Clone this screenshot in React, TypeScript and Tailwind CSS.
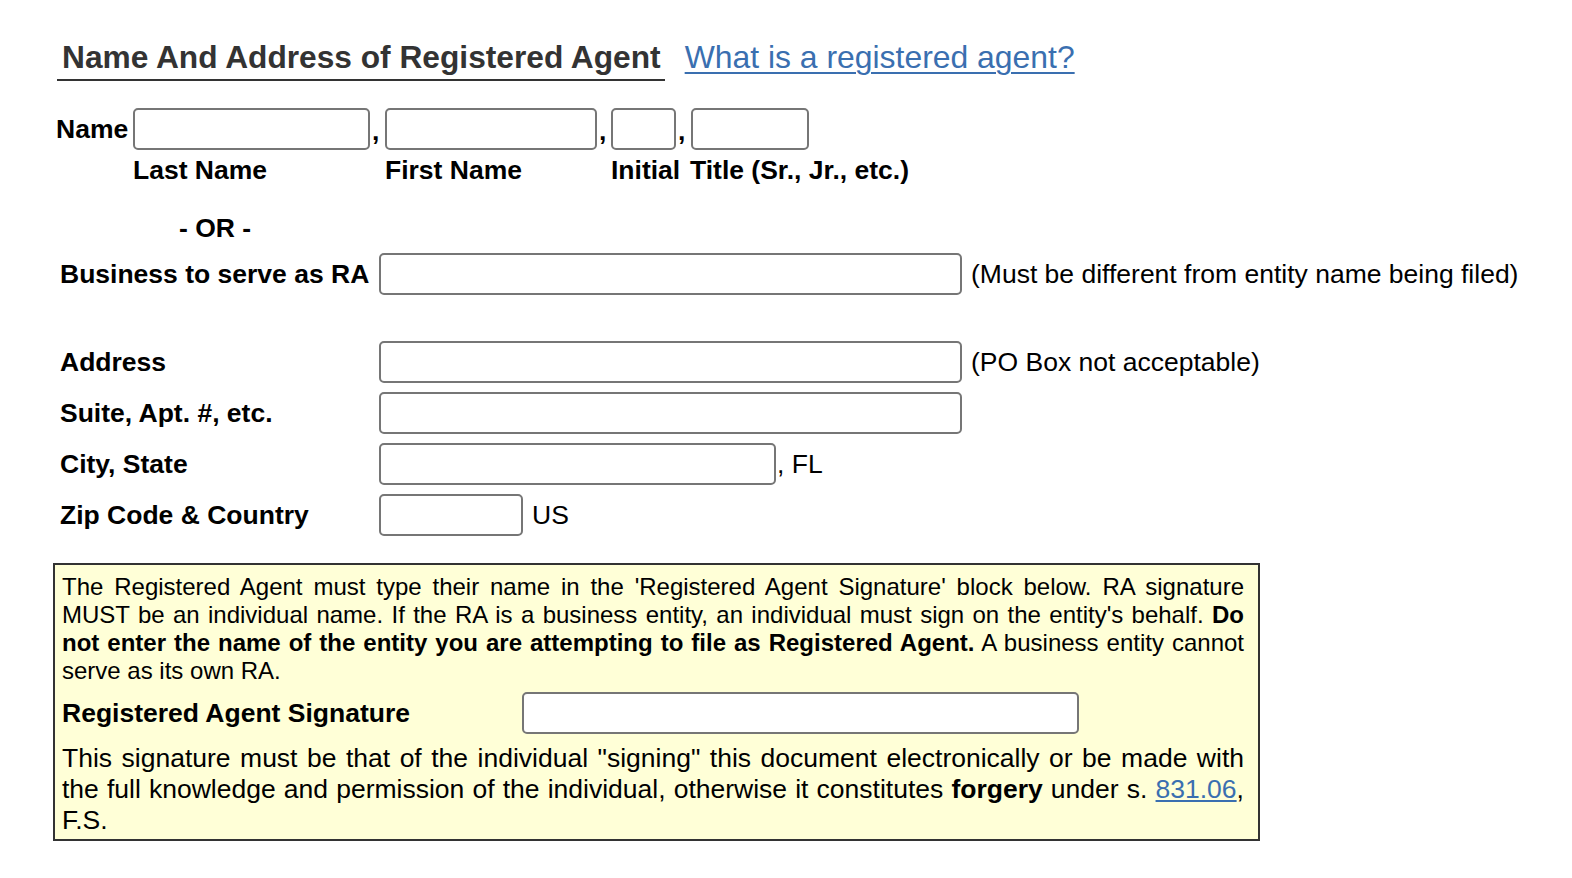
import React from "react";

const inputCls =
  "block h-[42px] shrink-0 rounded-[5px] border-2 border-[#767676] bg-white";

function Row({
  label,
  inputW,
  after,
  afterCls,
  className,
}: {
  label: string;
  inputW: string;
  after?: string;
  afterCls?: string;
  className?: string;
}) {
  return (
    <div className={`ml-[60px] flex items-center ${className ?? ""}`}>
      <span className="w-[319px] shrink-0 text-[26.5px] font-bold leading-[30px] text-black">
        {label}
      </span>
      <span className={`${inputCls} ${inputW}`} />
      {after ? (
        <span className={`text-[26.5px] leading-[30px] text-black ${afterCls ?? ""}`}>
          {after}
        </span>
      ) : null}
    </div>
  );
}

export default function App() {
  return (
    <div
      className="min-h-[878px] w-full bg-white pt-[39px] text-black"
      style={{ fontFamily: '"Liberation Sans", Arial, Helvetica, sans-serif' }}
    >
      {/* Heading */}
      <div className="ml-[57px] flex items-start">
        <h2 className="border-b-2 border-[#333333] pb-[4px] pl-[5px] pr-[4px] text-[31.7px] font-bold leading-[36px] text-[#333333]">
          Name And Address of Registered Agent
        </h2>
        <a
          href="#"
          className="ml-[20px] text-[31.9px] leading-[36px] text-[#3a6fb0] underline decoration-2 underline-offset-[4px]"
        >
          What is a registered agent?
        </a>
      </div>

      {/* Name row */}
      <div className="ml-[56px] mt-[27px] flex h-[42px] items-center">
        <span className="w-[77px] shrink-0 text-[26.5px] font-bold leading-[30px]">Name</span>
        <span className={`${inputCls} w-[237px]`} />
        <span className="w-[15px] shrink-0 self-end pb-[4px] pl-[2px] text-[26.5px] font-bold leading-[30px]">,</span>
        <span className={`${inputCls} w-[212px]`} />
        <span className="w-[14px] shrink-0 self-end pb-[4px] pl-[2px] text-[26.5px] font-bold leading-[30px]">,</span>
        <span className={`${inputCls} w-[65px]`} />
        <span className="w-[15px] shrink-0 self-end pb-[4px] pl-[2px] text-[26.5px] font-bold leading-[30px]">,</span>
        <span className={`${inputCls} w-[118px]`} />
      </div>
      <div className="ml-[133px] mt-[5px] flex text-[26.5px] font-bold leading-[30px]">
        <span className="w-[252px] shrink-0">Last Name</span>
        <span className="w-[226px] shrink-0">First Name</span>
        <span className="w-[79px] shrink-0">Initial</span>
        <span className="shrink-0">Title (Sr., Jr., etc.)</span>
      </div>

      <div className="ml-[179px] mt-[28px] text-[26.5px] font-bold leading-[30px]">- OR -</div>

      <Row
        className="mt-[10px]"
        label="Business to serve as RA"
        inputW="w-[583px]"
        after="(Must be different from entity name being filed)"
        afterCls="ml-[9px]"
      />

      <Row
        className="mt-[46px]"
        label="Address"
        inputW="w-[583px]"
        after="(PO Box not acceptable)"
        afterCls="ml-[9px]"
      />
      <Row className="mt-[9px]" label="Suite, Apt. #, etc." inputW="w-[583px]" />
      <Row className="mt-[9px]" label="City, State" inputW="w-[397px]" after=", FL" afterCls="ml-[1px]" />
      <Row className="mt-[9px]" label="Zip Code & Country" inputW="w-[144px]" after="US" afterCls="ml-[9px]" />

      {/* Signature box */}
      <div className="ml-[53px] mt-[27px] w-[1207px] border-2 border-[#333333] bg-[#ffffd7] pb-[3px] pl-[7px] pr-[14px] pt-[8px]">
        <p className="text-justify text-[24px] leading-[28px]">
          The Registered Agent must type their name in the 'Registered Agent Signature' block below. RA
          signature MUST be an individual name. If the RA is a business entity, an individual must sign on
          the entity's behalf.{" "}
          <b>Do not enter the name of the entity you are attempting to file as Registered Agent.</b> A business
          entity cannot serve as its own RA.
        </p>
        <div className="mt-[7px] flex items-center">
          <span className="w-[460px] shrink-0 text-[26.5px] font-bold leading-[30px]">
            Registered Agent Signature
          </span>
          <span className={`${inputCls} w-[557px]`} />
        </div>
        <p className="mt-[9px] text-justify text-[26.5px] leading-[31px]">
          This signature must be that of the individual "signing" this document electronically or be made with
          the full knowledge and permission of the individual, otherwise it constitutes <b>forgery</b> under s.{" "}
          <a href="#" className="text-[#3a6fb0] underline">
            831.06
          </a>
          , F.S.
        </p>
      </div>
    </div>
  );
}
